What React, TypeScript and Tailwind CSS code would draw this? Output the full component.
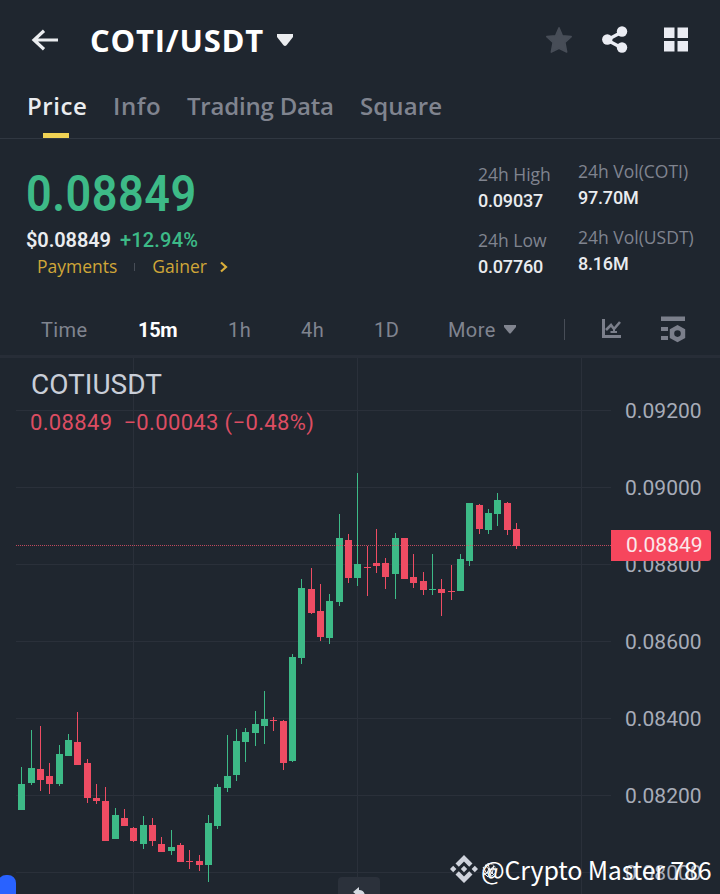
import type { ReactNode } from "react";

const tabs = [
  { name: "Price", style: "w-[59px] tracking-[0.6px]", active: true },
  { name: "Info", style: "w-[47px] tracking-[0.6px]", active: false },
  { name: "Trading Data", style: "w-[146px] tracking-[-0.2px]", active: false },
  { name: "Square", style: "w-[84px] tracking-[0.1px]", active: false },
];

const axisLabels = ["0.09200", "0.09000", "0.08800", "0.08600", "0.08400", "0.08200", "0.08000"];

// [up, high, open/close top, open/close bottom, low]
const candles: [number, number, number, number, number][] = [
  [1, 767, 784, 810, 810],
  [1, 730, 768, 783, 785],
  [0, 726, 769, 780, 791],
  [0, 763, 776, 784, 794],
  [1, 745, 754, 784, 786],
  [1, 734, 740, 756, 756],
  [0, 712, 742, 765, 765],
  [0, 759, 763, 798, 803],
  [0, 784, 798, 801, 804],
  [0, 787, 801, 841, 841],
  [1, 808, 815, 839, 839],
  [0, 809, 818, 826, 826],
  [0, 827, 828, 841, 842],
  [1, 816, 825, 844, 849],
  [0, 818, 825, 841, 846],
  [0, 837, 844, 852, 852],
  [1, 830, 847, 851, 855],
  [0, 843, 845, 862, 862],
  [0, 850, 861, 862, 869],
  [0, 855, 861, 865, 871],
  [1, 815, 823, 865, 882],
  [1, 784, 787, 826, 829],
  [1, 735, 776, 788, 792],
  [1, 729, 741, 775, 781],
  [1, 728, 732, 742, 762],
  [1, 711, 724, 733, 746],
  [1, 691, 719, 726, 744],
  [0, 717, 720, 721, 731],
  [0, 720, 721, 763, 770],
  [1, 654, 657, 761, 762],
  [1, 579, 588, 658, 664],
  [0, 568, 589, 613, 614],
  [0, 584, 611, 637, 641],
  [1, 594, 601, 638, 644],
  [1, 514, 538, 602, 606],
  [0, 534, 540, 578, 583],
  [1, 473, 564, 578, 586],
  [0, 546, 567, 568, 596],
  [0, 529, 563, 566, 573],
  [0, 558, 563, 577, 589],
  [1, 533, 538, 574, 599],
  [0, 538, 538, 579, 579],
  [0, 554, 577, 583, 588],
  [0, 572, 581, 590, 595],
  [1, 554, 589, 590, 595],
  [0, 579, 589, 593, 616],
  [0, 565, 591, 592, 600],
  [1, 554, 559, 591, 591],
  [1, 503, 503, 561, 566],
  [0, 504, 505, 529, 534],
  [1, 509, 513, 530, 534],
  [1, 493, 500, 514, 526],
  [0, 502, 503, 530, 535],
  [0, 523, 529, 546, 549],
];

function Header() {
  return (
    <div className="flex h-[80px] items-center pl-[30px] pr-[31px]">
      <svg width="28" height="24" viewBox="0 0 28 24" fill="none" stroke="#eaecef" strokeWidth="3.2">
        <path d="M28 12H4M14 2.800L4 12l10 9.200" strokeLinejoin="miter" />
      </svg>
      <h1 className="ml-[32px] w-[174px] whitespace-nowrap font-['Open_Sans'] text-[31px] font-bold leading-none tracking-[0.8px] text-white">
        COTI/USDT
      </h1>
      <svg className="ml-[12px]" width="18" height="14" viewBox="0 0 18 14" fill="#eaecef">
        <path d="M1 1h16v3L10.5 12.3Q9 13.6 7.5 12.3L1 4z" />
      </svg>
      <svg className="ml-auto" width="28" height="28" viewBox="0 0 28 28" fill="#474d57" stroke="#474d57" strokeWidth="1.5" strokeLinejoin="round">
        <path d="M14 1.800l3.400 7.900 8.800.900-6.300 5.900 1.800 9.600-7.700-3.800-7.700 3.800 1.800-9.600-6.300-5.900 8.800-.9z" />
      </svg>
      <svg className="ml-[28px]" width="28" height="28" viewBox="0 0 28 28" fill="#eaecf3">
        <path d="M6 14L21 6M6 14l15 8" stroke="#eaecf3" strokeWidth="3.200" />
        <circle cx="6.3" cy="13.500" r="5.200" />
        <circle cx="21" cy="5.500" r="5.200" />
        <circle cx="21" cy="21.500" r="5.200" />
      </svg>
      <svg className="ml-[34px]" width="26" height="26" viewBox="0 0 26 26" fill="#eaecf3">
        <path d="M1 .5h10.500V11H1zM14.500 .5H25V11H14.500zM1 14h10.500v10.500H1zM14.500 14H25v10.500H14.500z" />
      </svg>
    </div>
  );
}

function Tabs() {
  return (
    <div className="flex h-[59px] gap-[27px] border-b border-[#303741] pl-[27px] font-['Open_Sans'] text-[24px] font-semibold leading-none">
      {tabs.map((tab) => (
        <div key={tab.name} className={`${tab.style} flex flex-col justify-between pt-[14px]`}>
          <span className={`whitespace-nowrap ${tab.active ? "text-[#eaecef]" : "text-[#80848f]"}`}>
            {tab.name}
          </span>
          {tab.active && <div className="ml-[16px] h-[5px] w-[26px] bg-[#f0d254]" />}
        </div>
      ))}
    </div>
  );
}

function Stat({ label, value }: { label: string; value: string }) {
  return (
    <div className="h-[66px] whitespace-nowrap">
      <div className="font-['Open_Sans'] text-[17.500px] leading-[24px] text-[#80848f]">{label}</div>
      <div className="mt-[2px] font-['Roboto'] text-[18px] font-medium leading-[26px] tracking-[-0.2px] text-[#eaecef]">
        {value}
      </div>
    </div>
  );
}

function Summary() {
  return (
    <div className="flex h-[161px]">
      <div className="w-[478px] pl-[26px]">
        <div className="mt-[31px] w-[190px] origin-left scale-x-[0.9] font-['Roboto'] text-[50px] font-semibold leading-[48px] tracking-[0.6px] text-[#3dba87]">
          0.08849
        </div>
        <div className="mt-[9px] flex gap-[9px] font-['Roboto'] text-[20px] font-semibold leading-[26px]">
          <span className="tracking-[-0.1px] text-[#eaecef]">$0.08849</span>
          <span className="font-medium tracking-[0.2px] text-[#3dba87]">+12.94%</span>
        </div>
        <div className="flex items-center pl-[11px] font-['Open_Sans'] text-[17.500px] leading-[27px] text-[#d0a738]">
          <span>Payments</span>
          <span className="ml-[17px] h-[8px] w-px bg-[#474d57]" />
          <span className="ml-[17px]">Gainer</span>
          <svg className="ml-[12px]" width="10" height="12" viewBox="0 0 10 12" fill="none" stroke="#d9ae3a" strokeWidth="2.2">
            <path d="M2 1.500L7 6l-5 4.500" />
          </svg>
        </div>
      </div>
      <div className="w-[100px] pt-[23px]">
        <Stat label="24h High" value="0.09037" />
        <Stat label="24h Low" value="0.07760" />
      </div>
      <div className="pt-[20px]">
        <Stat label="24h Vol(COTI)" value="97.70M" />
        <Stat label="24h Vol(USDT)" value="8.16M" />
      </div>
    </div>
  );
}

function Interval({ width, children }: { width: string; children: ReactNode }) {
  return <div className={`${width} whitespace-nowrap`}>{children}</div>;
}

function Intervals() {
  return (
    <div className="flex h-[58px] items-center border-b-[3px] border-[#272d37] pl-[41px] pt-[4px] font-['Roboto'] text-[20px] tracking-[0.4px] text-[#80848f]">
      <Interval width="w-[97px]">Time</Interval>
      <Interval width="w-[90px]">
        <span className="font-bold tracking-[-0.3px] text-white">15m</span>
      </Interval>
      <Interval width="w-[73px]">1h</Interval>
      <Interval width="w-[73px]">4h</Interval>
      <Interval width="w-[74px]">1D</Interval>
      <Interval width="w-[56px]">More</Interval>
      <svg width="12" height="9" viewBox="0 0 12 9" fill="#80848f">
        <path d="M0 0h12v2L7 8Q6 9 5 8L0 2z" />
      </svg>
      <div className="ml-[48px] h-[21px] w-px bg-[#474d57]" />
      <svg className="ml-[37px]" width="20" height="21" viewBox="0 0 20 21" fill="none" stroke="#7b7f8b" strokeWidth="3">
        <path d="M1.500 0v17.500H19" />
        <path d="M4 11l5-5 3 4 6-7" strokeWidth="2.600" />
        <path d="M12 9v4M8.500 13h6.500" strokeWidth="2" />
      </svg>
      <svg className="ml-[38px]" width="26" height="27" viewBox="0 0 26 27" fill="#7b7f8b">
        <path d="M1 .5h24v4.500H1zM1 11h7v4H1zM1 20h7v4H1z" />
        <path fillRule="evenodd" d="M17.500 9l7.700 4.300v8.600l-7.700 4.300-7.700-4.300v-8.600zM17.500 14.300a3.300 3.300 0 1 0 0 6.600 3.300 3.300 0 0 0 0-6.600z" />
      </svg>
    </div>
  );
}

function CandleChart() {
  return (
    <svg className="absolute inset-0" width="720" height="536" viewBox="0 358 720 536" shapeRendering="crispEdges">
      {[133, 357, 581].map((x) => (
        <rect key={x} x={x} y="357" width="1" height="537" fill="#2a303a" />
      ))}
      {axisLabels.map((label, i) => (
        <rect key={label} x="16" y={410 + i * 77} width="595" height="1" fill="#2a303a" />
      ))}
      {candles.map(([up, high, top, bottom, low], i) => {
        const x = Math.ceil(18 + (i * 28) / 3 - 0.01);
        return (
          <g key={i} fill={up ? "#3dba87" : "#ee4c63"}>
            <rect x={x + 3} y={high} width="1" height={low - high} />
            <rect x={x} y={top} width="7" height={bottom - top} />
          </g>
        );
      })}
      <path d="M16 545.500H611" stroke="#e8536a" strokeDasharray="1 1" opacity="0.800" />
    </svg>
  );
}

function Watermark() {
  return (
    <div className="absolute bottom-[10px] left-[450px] flex items-center">
      <svg width="28" height="28" viewBox="0 0 28 28" fill="#cfd3dc">
        <path d="M14 0l8.500 8.500-3.300 3.300L14 6.600l-5.200 5.200-3.300-3.300zM14 28l-8.500-8.500 3.300-3.300 5.200 5.200 5.200-5.200 3.300 3.300zM14 10.800l3.200 3.200-3.200 3.200-3.200-3.200zM3.200 10.800L6.400 14l-3.200 3.200L0 14zM24.800 10.800L28 14l-3.200 3.200-3.200-3.200z" />
      </svg>
      <div className="relative ml-[3px] whitespace-nowrap font-['Noto_Sans_CJK_SC',sans-serif] text-[25px] leading-[30px] tracking-[-0.15px] text-white">
        @Crypto Master 786
        <svg className="absolute left-0 top-[7px]" width="17" height="19" viewBox="0 0 17 19" fill="none" stroke="#f4f5f7" strokeWidth="1">
          <circle cx="8.500" cy="9" r="6.300" strokeDasharray="2 1" />
          <path d="M2 6l4 7 2-6 3 6 2-8M3 14l10-9M4 4l9 10M2 11l5 5M7 2l3 14" />
        </svg>
      </div>
    </div>
  );
}

function Chart() {
  return (
    <div className="relative h-[536px] overflow-hidden font-['Roboto']">
      <CandleChart />
      <div className="relative flex justify-between">
        <div className="pl-[30px] pt-[10px]">
          <div className="pl-px text-[28px] leading-[34px] text-[#c9ced8]">COTIUSDT</div>
          <div className="mt-[7px] flex gap-[11px] text-[22px] leading-[28px] tracking-[0.35px] text-[#dc4d62]">
            <span>0.08849</span>
            <span>−0.00043 (−0.48%)</span>
          </div>
        </div>
        <div className="w-[95px] pt-[15px] text-[21px] tracking-[0.05px] text-[#a7acb8]">
          {axisLabels.map((label) => (
            <div key={label} className="flex h-[77px] items-center">{label}</div>
          ))}
        </div>
      </div>
      <div className="absolute left-[611px] top-[172px] flex h-[31px] w-[100px] items-center rounded-r-[3px] bg-[#f6465d] pl-[15px] pt-px text-[21px] tracking-[0.05px] text-[#fbe7ea]">
        0.08849
      </div>
      <div className="absolute left-[338px] top-[519px] flex h-[24px] w-[42px] justify-center rounded-[4px] bg-[#2b313b] pt-[10px]">
        <svg width="14" height="10" viewBox="0 0 14 10" fill="#d5d9e1">
          <path d="M1 5l6-5v3q6 0 6 7h-3q0-3-3-3v3z" />
        </svg>
      </div>
      <div className="absolute left-[-2px] top-[517px] h-[30px] w-[18px] rounded-[8px] bg-[#2962ff]" />
      <Watermark />
    </div>
  );
}

export default function App() {
  return (
    <div className="h-[894px] w-[720px] overflow-hidden bg-[#1f262f]">
      <Header />
      <Tabs />
      <Summary />
      <Intervals />
      <Chart />
    </div>
  );
}
